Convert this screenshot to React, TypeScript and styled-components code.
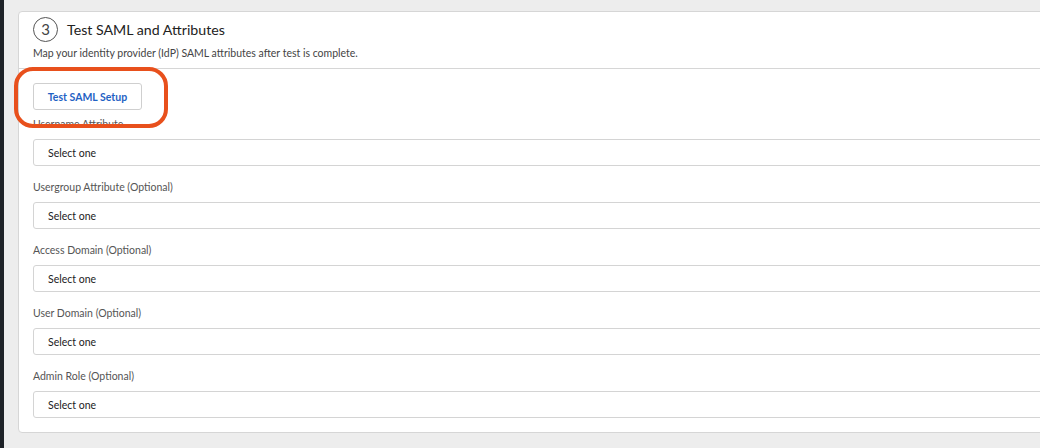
import * as React from 'react'
import styled, { createGlobalStyle } from 'styled-components'

const GlobalStyle = createGlobalStyle`
  html, body {
    margin: 0;
    padding: 0;
    background: #ededed;
    font-family: Lato, "Open Sans", "Liberation Sans", sans-serif;
    overflow: hidden;
  }
`

const Page = styled.div`
  display: flex;
  width: 1040px;
  height: 448px;
  overflow: hidden;
`

const SideEdge = styled.div`
  flex: 0 0 4px;
  background: #1e2228;
`

const Content = styled.div`
  flex: 0 0 auto;
  padding: 11px 0 0 14px;
`

const Card = styled.section`
  width: 1060px;
  background: #fff;
  border: 1px solid #d6d6d6;
  border-radius: 4px;
  box-sizing: border-box;
`

const Header = styled.header`
  padding: 5px 14px 8px;
  border-bottom: 1px solid #d6d6d6;
`

const TitleRow = styled.div`
  display: flex;
  align-items: center;
  gap: 9px;
  height: 25px;
`

const StepBadge = styled.span`
  display: inline-flex;
  align-items: center;
  justify-content: center;
  width: 25px;
  height: 25px;
  box-sizing: border-box;
  border: 1.5px solid #555;
  border-radius: 50%;
  font-size: 15px;
  color: #444;
  line-height: 1;
`

const Title = styled.h2`
  margin: 0;
  font-size: 14.2px;
  font-weight: 400;
  color: #222;
`

const Subtitle = styled.p`
  margin: 4px 0 0;
  font-size: 10.5px;
  color: #444;
  line-height: 14px;
`

const Form = styled.div`
  position: relative;
  padding: 14px 14px 14px;
`

/* callout ring drawn around the test button */
const Highlight = styled.span`
  position: absolute;
  top: -2px;
  left: -5px;
  width: 154px;
  height: 61px;
  box-sizing: border-box;
  border: 4px solid #e8501c;
  border-radius: 19px;
  pointer-events: none;
`

const TestButton = styled.button`
  display: block;
  width: 109px;
  height: 27px;
  margin-bottom: 7px;
  padding: 0;
  background: #fff;
  border: 1px solid #cfcfcf;
  border-radius: 3px;
  font-family: inherit;
  font-size: 10.5px;
  font-weight: 700;
  color: #1f62c4;
`

const Field = styled.div<{ first?: boolean }>`
  margin-top: ${(p) => (p.first ? 0 : 14)}px;
`

const Label = styled.label`
  display: block;
  height: 14px;
  line-height: 14px;
  margin-bottom: 8px;
  font-size: 10.5px;
  color: #555;
`

const Select = styled.div`
  display: flex;
  align-items: center;
  height: 27px;
  padding: 0 14px;
  box-sizing: border-box;
  border: 1px solid #d4d4d4;
  border-radius: 3px;
  font-size: 10.5px;
  color: #222;
`

const fields = [
  'Username Attribute',
  'Usergroup Attribute (Optional)',
  'Access Domain (Optional)',
  'User Domain (Optional)',
  'Admin Role (Optional)',
]

export default function App() {
  return (
    <>
      <GlobalStyle />
      <Page>
        <SideEdge />
        <Content>
          <Card>
            <Header>
              <TitleRow>
                <StepBadge>3</StepBadge>
                <Title>Test SAML and Attributes</Title>
              </TitleRow>
              <Subtitle>Map your identity provider (IdP) SAML attributes after test is complete.</Subtitle>
            </Header>
            <Form>
              <TestButton>Test SAML Setup</TestButton>
              {fields.map((f, i) => (
                <Field key={f} first={i === 0}>
                  <Label>{f}</Label>
                  <Select>Select one</Select>
                </Field>
              ))}
              <Highlight />
            </Form>
          </Card>
        </Content>
      </Page>
    </>
  )
}
